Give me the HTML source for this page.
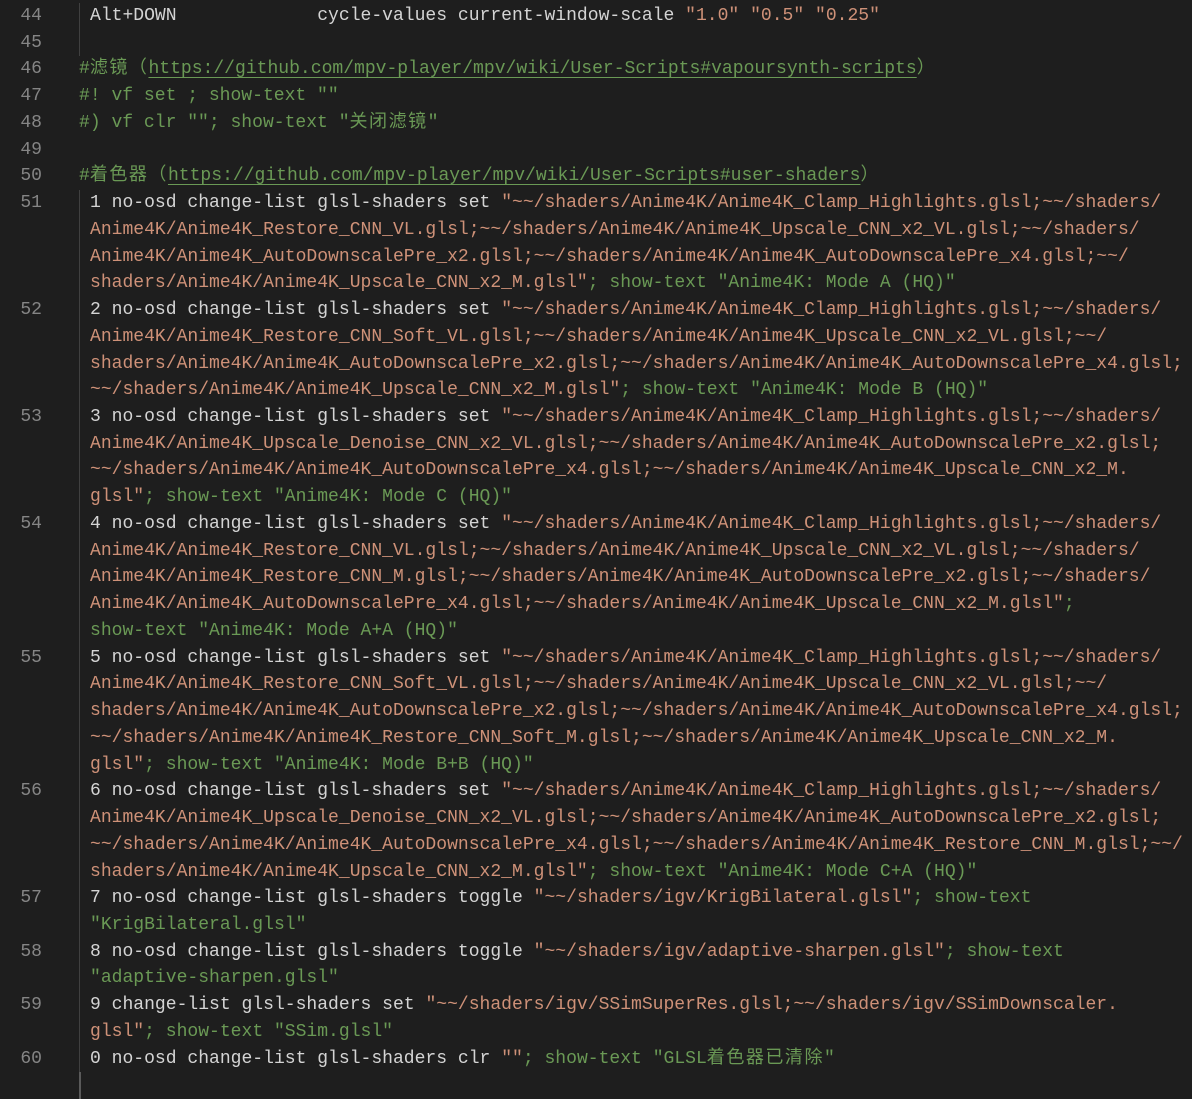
<!DOCTYPE html>
<html><head><meta charset="utf-8"><style>
html,body{margin:0;padding:0;background:#1e1e1e;width:1192px;height:1078px;overflow:hidden}
.ed{position:absolute;left:0;top:3px;width:1192px;font-family:"Liberation Mono","Noto Sans CJK SC",monospace;font-size:18.05px;line-height:26.74px}
.r{position:relative;height:26.74px;white-space:pre;color:#d4d4d4}
.n{position:absolute;left:0;width:42px;text-align:right;color:#858585}
.t{position:absolute;left:90px}
.tc{position:absolute;left:79px}
.g{position:absolute;left:79px;top:0;width:1px;height:100%;background:#404040}
.s{color:#ce9178}.c{color:#6a9955}
.k{letter-spacing:1.5px}
u{text-decoration-color:#6a9955;text-underline-offset:4px;text-decoration-thickness:1px}
</style></head><body><div class="ed">
<div class="r"><span class="n">44</span><i class="g"></i><span class="t">Alt+DOWN             cycle-values current-window-scale <span class="s">"1.0"</span> <span class="s">"0.5"</span> <span class="s">"0.25"</span></span></div>
<div class="r"><span class="n">45</span><i class="g"></i></div>
<div class="r"><span class="n">46</span><span class="tc c">#<span class="k">滤镜（</span><u>https://github.com/mpv-player/mpv/wiki/User-Scripts#vapoursynth-scripts</u>）</span></div>
<div class="r"><span class="n">47</span><span class="tc c">#! vf set ; show-text ""</span></div>
<div class="r"><span class="n">48</span><span class="tc c">#) vf clr ""; show-text "<span class="k">关闭滤镜</span>"</span></div>
<div class="r"><span class="n">49</span></div>
<div class="r"><span class="n">50</span><span class="tc c">#<span class="k">着色器（</span><u>https://github.com/mpv-player/mpv/wiki/User-Scripts#user-shaders</u>）</span></div>
<div class="r"><span class="n">51</span><i class="g"></i><span class="t">1 no-osd change-list glsl-shaders set <span class="s">"~~/shaders/Anime4K/Anime4K_Clamp_Highlights.glsl;~~/shaders/</span></span></div>
<div class="r"><i class="g"></i><span class="t s">Anime4K/Anime4K_Restore_CNN_VL.glsl;~~/shaders/Anime4K/Anime4K_Upscale_CNN_x2_VL.glsl;~~/shaders/</span></div>
<div class="r"><i class="g"></i><span class="t s">Anime4K/Anime4K_AutoDownscalePre_x2.glsl;~~/shaders/Anime4K/Anime4K_AutoDownscalePre_x4.glsl;~~/</span></div>
<div class="r"><i class="g"></i><span class="t"><span class="s">shaders/Anime4K/Anime4K_Upscale_CNN_x2_M.glsl"</span><span class="c">; show-text "Anime4K: Mode A (HQ)"</span></span></div>
<div class="r"><span class="n">52</span><i class="g"></i><span class="t">2 no-osd change-list glsl-shaders set <span class="s">"~~/shaders/Anime4K/Anime4K_Clamp_Highlights.glsl;~~/shaders/</span></span></div>
<div class="r"><i class="g"></i><span class="t s">Anime4K/Anime4K_Restore_CNN_Soft_VL.glsl;~~/shaders/Anime4K/Anime4K_Upscale_CNN_x2_VL.glsl;~~/</span></div>
<div class="r"><i class="g"></i><span class="t s">shaders/Anime4K/Anime4K_AutoDownscalePre_x2.glsl;~~/shaders/Anime4K/Anime4K_AutoDownscalePre_x4.glsl;</span></div>
<div class="r"><i class="g"></i><span class="t"><span class="s">~~/shaders/Anime4K/Anime4K_Upscale_CNN_x2_M.glsl"</span><span class="c">; show-text "Anime4K: Mode B (HQ)"</span></span></div>
<div class="r"><span class="n">53</span><i class="g"></i><span class="t">3 no-osd change-list glsl-shaders set <span class="s">"~~/shaders/Anime4K/Anime4K_Clamp_Highlights.glsl;~~/shaders/</span></span></div>
<div class="r"><i class="g"></i><span class="t s">Anime4K/Anime4K_Upscale_Denoise_CNN_x2_VL.glsl;~~/shaders/Anime4K/Anime4K_AutoDownscalePre_x2.glsl;</span></div>
<div class="r"><i class="g"></i><span class="t s">~~/shaders/Anime4K/Anime4K_AutoDownscalePre_x4.glsl;~~/shaders/Anime4K/Anime4K_Upscale_CNN_x2_M.</span></div>
<div class="r"><i class="g"></i><span class="t"><span class="s">glsl"</span><span class="c">; show-text "Anime4K: Mode C (HQ)"</span></span></div>
<div class="r"><span class="n">54</span><i class="g"></i><span class="t">4 no-osd change-list glsl-shaders set <span class="s">"~~/shaders/Anime4K/Anime4K_Clamp_Highlights.glsl;~~/shaders/</span></span></div>
<div class="r"><i class="g"></i><span class="t s">Anime4K/Anime4K_Restore_CNN_VL.glsl;~~/shaders/Anime4K/Anime4K_Upscale_CNN_x2_VL.glsl;~~/shaders/</span></div>
<div class="r"><i class="g"></i><span class="t s">Anime4K/Anime4K_Restore_CNN_M.glsl;~~/shaders/Anime4K/Anime4K_AutoDownscalePre_x2.glsl;~~/shaders/</span></div>
<div class="r"><i class="g"></i><span class="t"><span class="s">Anime4K/Anime4K_AutoDownscalePre_x4.glsl;~~/shaders/Anime4K/Anime4K_Upscale_CNN_x2_M.glsl"</span><span class="c">;</span></span></div>
<div class="r"><i class="g"></i><span class="t c">show-text "Anime4K: Mode A+A (HQ)"</span></div>
<div class="r"><span class="n">55</span><i class="g"></i><span class="t">5 no-osd change-list glsl-shaders set <span class="s">"~~/shaders/Anime4K/Anime4K_Clamp_Highlights.glsl;~~/shaders/</span></span></div>
<div class="r"><i class="g"></i><span class="t s">Anime4K/Anime4K_Restore_CNN_Soft_VL.glsl;~~/shaders/Anime4K/Anime4K_Upscale_CNN_x2_VL.glsl;~~/</span></div>
<div class="r"><i class="g"></i><span class="t s">shaders/Anime4K/Anime4K_AutoDownscalePre_x2.glsl;~~/shaders/Anime4K/Anime4K_AutoDownscalePre_x4.glsl;</span></div>
<div class="r"><i class="g"></i><span class="t s">~~/shaders/Anime4K/Anime4K_Restore_CNN_Soft_M.glsl;~~/shaders/Anime4K/Anime4K_Upscale_CNN_x2_M.</span></div>
<div class="r"><i class="g"></i><span class="t"><span class="s">glsl"</span><span class="c">; show-text "Anime4K: Mode B+B (HQ)"</span></span></div>
<div class="r"><span class="n">56</span><i class="g"></i><span class="t">6 no-osd change-list glsl-shaders set <span class="s">"~~/shaders/Anime4K/Anime4K_Clamp_Highlights.glsl;~~/shaders/</span></span></div>
<div class="r"><i class="g"></i><span class="t s">Anime4K/Anime4K_Upscale_Denoise_CNN_x2_VL.glsl;~~/shaders/Anime4K/Anime4K_AutoDownscalePre_x2.glsl;</span></div>
<div class="r"><i class="g"></i><span class="t s">~~/shaders/Anime4K/Anime4K_AutoDownscalePre_x4.glsl;~~/shaders/Anime4K/Anime4K_Restore_CNN_M.glsl;~~/</span></div>
<div class="r"><i class="g"></i><span class="t"><span class="s">shaders/Anime4K/Anime4K_Upscale_CNN_x2_M.glsl"</span><span class="c">; show-text "Anime4K: Mode C+A (HQ)"</span></span></div>
<div class="r"><span class="n">57</span><i class="g"></i><span class="t">7 no-osd change-list glsl-shaders toggle <span class="s">"~~/shaders/igv/KrigBilateral.glsl"</span><span class="c">; show-text</span></span></div>
<div class="r"><i class="g"></i><span class="t c">"KrigBilateral.glsl"</span></div>
<div class="r"><span class="n">58</span><i class="g"></i><span class="t">8 no-osd change-list glsl-shaders toggle <span class="s">"~~/shaders/igv/adaptive-sharpen.glsl"</span><span class="c">; show-text</span></span></div>
<div class="r"><i class="g"></i><span class="t c">"adaptive-sharpen.glsl"</span></div>
<div class="r"><span class="n">59</span><i class="g"></i><span class="t">9 change-list glsl-shaders set <span class="s">"~~/shaders/igv/SSimSuperRes.glsl;~~/shaders/igv/SSimDownscaler.</span></span></div>
<div class="r"><i class="g"></i><span class="t"><span class="s">glsl"</span><span class="c">; show-text "SSim.glsl"</span></span></div>
<div class="r"><span class="n">60</span><i class="g"></i><span class="t">0 no-osd change-list glsl-shaders clr <span class="s">""</span><span class="c">; show-text "GLSL<span class="k">着色器已清除</span>"</span></span></div>
<div class="r"><i class="g" style="background:#5a5a5a;width:2px"></i></div>
</div></body></html>
